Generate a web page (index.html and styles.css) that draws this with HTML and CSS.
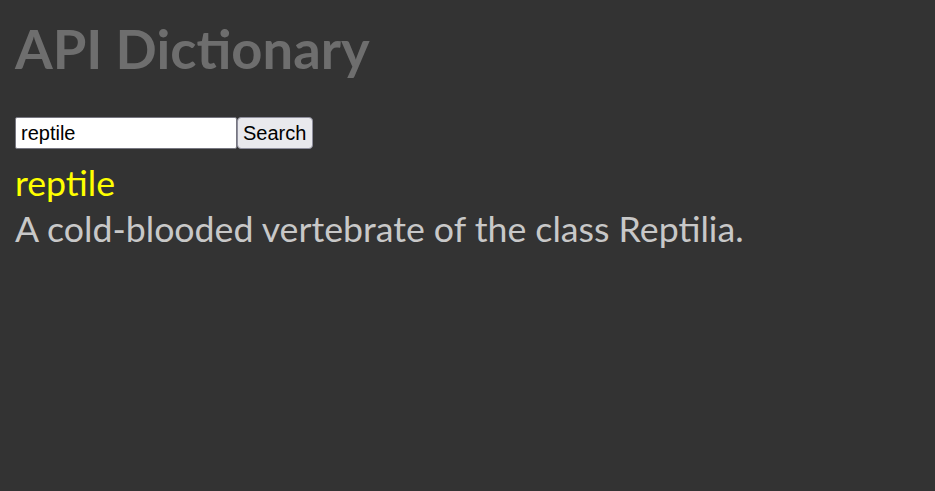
FILE: index.html
```html
<!DOCTYPE html>
<html>
<head>
<meta charset="utf-8">
<link rel="stylesheet" href="styles.css">
</head>
<body>
<h1 class="title">API Dictionary</h1>
<form class="search">
<input class="search-input" type="text" value="reptile"><button class="search-btn" type="button">Search</button>
</form>
<div class="result">
<div class="word">reptile</div>
<div class="definition">A cold-blooded vertebrate of the class Reptilia.</div>
</div>
</body>
</html>
```
FILE: styles.css
```css
html, body {
  margin: 0;
  padding: 0;
  background: #333333;
  height: 100%;
}
body {
  padding: 16px 15px;
  box-sizing: border-box;
  font-family: Lato, "Open Sans", sans-serif;
}
.title {
  margin: 0;
  font-size: 54.3px;
  line-height: 64px;
  font-weight: 700;
  color: #6e6e6e;
}
.search {
  display: flex;
  margin-top: 37px;
}
.search-input {
  width: 222px;
  height: 32px;
  box-sizing: border-box;
  border: 1px solid #767680;
  border-radius: 2px;
  padding: 0 5px;
  font-family: "Liberation Sans", sans-serif;
  font-size: 20px;
  color: #000;
  background: #fff;
  margin: 0;
}
.search-btn {
  height: 32px;
  box-sizing: border-box;
  border: 1px solid #8f8f9d;
  border-radius: 4px;
  background: #e9e9ed;
  padding: 0 6px 0 5px;
  font-family: "Liberation Sans", sans-serif;
  font-size: 20px;
  color: #000;
  margin: 0;
}
.word {
  margin-top: 11px;
  font-size: 35.7px;
  line-height: 46px;
  color: #ffff00;
}
.definition {
  font-size: 35.7px;
  line-height: 46px;
  color: #c8c8c8;
}
```
